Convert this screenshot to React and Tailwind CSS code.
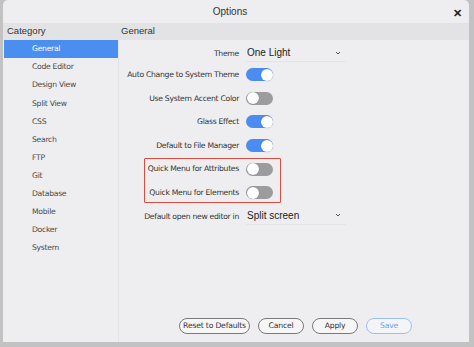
import React from "react";

const cats = ["General","Code Editor","Design View","Split View","CSS","Search","FTP","Git","Database","Mobile","Docker","System"];

function Toggle({ on }) {
  return (
    <div className={"relative w-[27px] h-[13px] rounded-full " + (on ? "bg-[#4a8cf2]" : "bg-[#9c9c9e]")}>
      <div className={"absolute top-[0.5px] w-[12px] h-[12px] rounded-full bg-white shadow-[0_0_1px_rgba(0,0,0,0.4)] " + (on ? "right-[0.5px]" : "left-[0.5px]")} />
    </div>
  );
}

function Row({ label, children, h = "h-[23.6px]" }) {
  return (
    <div className={"flex items-center " + h}>
      <div className="w-[120px] text-right text-[7.7px] tracking-[-0.3px] text-[#333] whitespace-nowrap">{label}</div>
      <div className="ml-[7px] flex items-center">{children}</div>
    </div>
  );
}

function Select({ value }) {
  return (
    <div className="w-[100px] flex items-center justify-between border-b border-[#e4e4e6] pb-[1px] font-['Liberation_Sans',sans-serif] text-[10px] text-[#222]">
      <span className="pl-[1px]">{value}</span>
      <svg width="6" height="4" viewBox="0 0 6 4" className="mr-[5px]">
        <path d="M1 1 L3 3 L5 1" fill="none" stroke="#555" strokeWidth="1" />
      </svg>
    </div>
  );
}

function Btn({ children, save }) {
  return (
    <div className={"h-[16px] flex items-center justify-center rounded-full border text-[7.7px] tracking-[-0.2px] whitespace-nowrap " + (save ? "border-[#9cc0ee] text-[#6c9fe6] bg-[#f3f5f9]" : "border-[#7a7a7a] text-[#333] bg-[#f6f6f6]")}>
      {children}
    </div>
  );
}

export default function App() {
  return (
    <div className="w-[474px] h-[347px] bg-[#c2c2c2] pl-[3px] pr-[5px] pb-[5px] font-['DejaVu_Sans',sans-serif]">
      <div className="w-full h-full bg-[#eeeef0] rounded-t-[5px] flex flex-col overflow-hidden">
        <div className="h-[23px] relative flex items-center justify-center pr-[12px] font-['Liberation_Sans',sans-serif] text-[10px] text-[#333]">
          Options
          <span className="absolute right-[7px] top-[5px] text-[11px] font-bold text-[#222]">✕</span>
        </div>
        <div className="h-[17px] flex bg-[#e3e3e5] font-['Liberation_Sans',sans-serif] text-[9.5px] text-[#333]">
          <div className="w-[115px] pl-[4px] flex items-center">Category</div>
          <div className="pl-[3px] flex items-center">General</div>
        </div>
        <div className="flex flex-1">
          <div className="w-[115px] pl-[1px]">
            {cats.map((c, i) => (
              <div key={c} className={"h-[18.1px] flex items-center pl-[28px] text-[7.7px] tracking-[-0.3px] " + (i === 0 ? "bg-[#4a8ff0] text-white" : "text-[#4a4a4a]")}>{c}</div>
            ))}
          </div>
          <div className="flex-1 border-l border-[#e4e4e6] flex flex-col relative">
            <div className="pt-[4px]">
              <Row label="Theme" h="h-[19px]"><Select value="One Light" /></Row>
              <Row label="Auto Change to System Theme"><Toggle on /></Row>
              <Row label="Use System Accent Color"><Toggle /></Row>
              <Row label="Glass Effect"><Toggle on /></Row>
              <Row label="Default to File Manager"><Toggle on /></Row>
              <Row label="Quick Menu for Attributes"><Toggle /></Row>
              <Row label="Quick Menu for Elements"><Toggle /></Row>
              <Row label="Default open new editor in"><Select value="Split screen" /></Row>
            </div>
            <div className="absolute left-[25px] top-[118px] w-[137px] h-[45px] border-[1.5px] border-[#de4a3c] rounded-[1px]" />
            <div className="mt-auto mb-[8px] flex gap-[8px] pl-[60px]">
              <div className="w-[71px]"><Btn>Reset to Defaults</Btn></div>
              <div className="w-[46px]"><Btn>Cancel</Btn></div>
              <div className="w-[46px]"><Btn>Apply</Btn></div>
              <div className="w-[46px]"><Btn save>Save</Btn></div>
            </div>
          </div>
        </div>
      </div>
    </div>
  );
}
